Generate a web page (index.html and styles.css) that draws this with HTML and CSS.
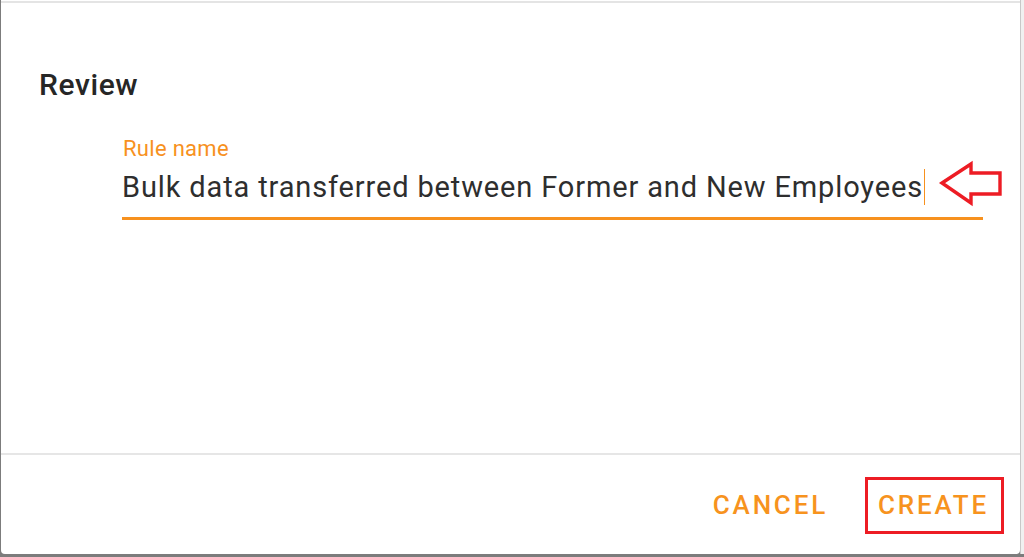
FILE: index.html
```html
<!DOCTYPE html>
<html lang="en">
<head>
<meta charset="utf-8">
<title>Review</title>
<link rel="stylesheet" href="styles.css">
</head>
<body>
<div class="screen">
  <div class="dialog">
    <div class="content">
      <h2 class="title">Review</h2>
      <div class="field">
        <label class="field-label">Rule name</label>
        <div class="field-input"><span class="value">Bulk data transferred between Former and New Employees</span><span class="caret"></span></div>
      </div>
    </div>
    <div class="divider"></div>
    <div class="actions">
      <button class="btn">CANCEL</button>
      <button class="btn btn-marked">CREATE</button>
    </div>
    <svg class="arrow" width="70" height="50" viewBox="0 0 70 50" aria-hidden="true">
      <polygon points="4,24 33,5 33,14 62,14 62,35 33,35 33,44" fill="none" stroke="#ed1c24" stroke-width="3.4" stroke-linejoin="miter"/>
    </svg>
  </div>
  <div class="side"></div>
</div>
</body>
</html>
```

FILE: styles.css
```css
html, body {
  margin: 0;
  padding: 0;
}
body {
  width: 1024px;
  height: 557px;
  overflow: hidden;
  background: #7c7c7c;
  font-family: Roboto, "Liberation Sans", Arial, sans-serif;
}
.screen {
  display: flex;
  height: 554px;
}
.dialog {
  position: relative;
  width: 1019px;
  height: 554px;
  margin-left: 1px;
  background: linear-gradient(#ffffff 0 1px, #e4e4e4 1px 3px, #ffffff 3px);
  border-radius: 0 0 4px 4px;
  display: flex;
  flex-direction: column;
  box-sizing: border-box;
}
.side {
  width: 3px;
  height: 554px;
  border-left: 1px solid #c8c8c8;
  background: #f0f0f0;
}
.content {
  flex: 1;
  padding-top: 67px;
  box-sizing: border-box;
}
.title {
  margin: 0 0 0 38px;
  font-size: 30px;
  line-height: 36px;
  font-weight: 500;
  letter-spacing: 0.6px;
  color: #262626;
}
.field {
  margin: 33px 0 0 121px;
  width: 861px;
}
.field-label {
  display: block;
  padding-left: 1px;
  font-size: 22px;
  line-height: 26px;
  letter-spacing: 0.3px;
  color: #f7911e;
}
.field-input {
  display: flex;
  align-items: center;
  margin-top: 7px;
  padding: 0 0 12px 0;
  border-bottom: 3px solid #f7911e;
  font-size: 29px;
  line-height: 36px;
  letter-spacing: 0.86px;
  color: #2e2e2e;
}
.caret {
  width: 1px;
  height: 36px;
  margin-left: 1px;
  background: #f7911e;
}
.divider {
  height: 2px;
  background: #e6e6e6;
}
.actions {
  display: flex;
  justify-content: flex-end;
  gap: 22px;
  padding: 22px 16px 20px 0;
}
.btn {
  font-family: Roboto, "Liberation Sans", Arial, sans-serif;
  font-size: 26px;
  font-weight: 500;
  letter-spacing: 2.8px;
  line-height: 51px;
  color: #f7931e;
  background: transparent;
  border: 3px solid transparent;
  padding: 0 12px 0 10px;
  margin: 0;
}
.btn-marked {
  border-color: #ed1c24;
}
.arrow {
  position: absolute;
  left: 937px;
  top: 159px;
}
```
